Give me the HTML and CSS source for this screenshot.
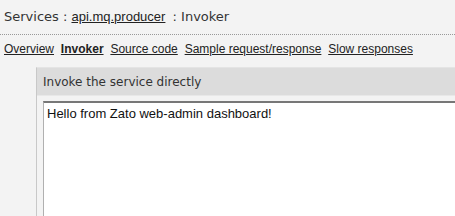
FILE: index.html
```html
<!DOCTYPE html>
<html lang="en">
<head>
    <meta charset="UTF-8">
    <title>Services : api.mq.producer : Invoker</title>
    <link rel="stylesheet" href="styles.css">
</head>
<body>
    <header class="page-header">
        <h1>Services : <a href="#">api.mq.producer</a> <span class="crumb-sep">:</span> Invoker</h1>
    </header>

    <nav class="page-nav">
        <a href="#">Overview</a>
        <a href="#" class="current">Invoker</a>
        <a href="#">Source code</a>
        <a href="#">Sample request/response</a>
        <a href="#">Slow responses</a>
    </nav>

    <section class="invoke-box">
        <div class="invoke-title">Invoke the service directly</div>
        <div class="invoke-body">
            <textarea class="invoke-input">Hello from Zato web-admin dashboard!</textarea>
        </div>
    </section>
</body>
</html>
```

FILE: styles.css
```css
/* Zato web-admin, service invoker page */
body {
    margin: 0;
    background-color: #f3f3f3;
    color: #333;
    font-family: "DejaVu Sans", sans-serif;
    overflow: hidden;
}

.page-header {
    padding: 8px 4px 9px 4px;
    border-bottom: 1px dotted #999;
}

.page-header h1 {
    margin: 0;
    font-size: 13px;
    font-weight: normal;
    line-height: 17px;
    color: #333;
}

.page-header a {
    font-family: "Liberation Sans", Arial, sans-serif;
    color: #222;
}

.crumb-sep {
    margin-left: 3px;
}

.page-nav {
    padding: 7px 4px 6px 4px;
    font-family: "Liberation Sans", Arial, sans-serif;
    font-size: 12px;
    line-height: 14px;
}

.page-nav a {
    color: #222;
    margin-right: 3.5px;
}

.page-nav a.current {
    font-weight: bold;
}

.invoke-box {
    margin: 5px 0 0 36px;
    border-left: 1px solid #c8c8c8;
    border-top: 1px solid #e4e4e4;
}

.invoke-title {
    background-color: #dcdcdc;
    padding: 6px 6px 5px 6px;
    font-size: 12px;
    line-height: 16px;
    color: #333;
    border-bottom: 1px solid #e8e8e8;
}

.invoke-body {
    padding: 5px 0 0 6px;
}

.invoke-input {
    display: block;
    box-sizing: border-box;
    width: 100%;
    height: 120px;
    margin: 0 -4px 0 0;
    padding: 3px 3px;
    border: 1px solid #b0b0b0;
    border-top: 2px solid #777;
    border-right: none;
    background: #fff;
    font-family: "Liberation Sans", Arial, sans-serif;
    font-size: 13px;
    line-height: 16px;
    color: #111;
    resize: none;
}
```
